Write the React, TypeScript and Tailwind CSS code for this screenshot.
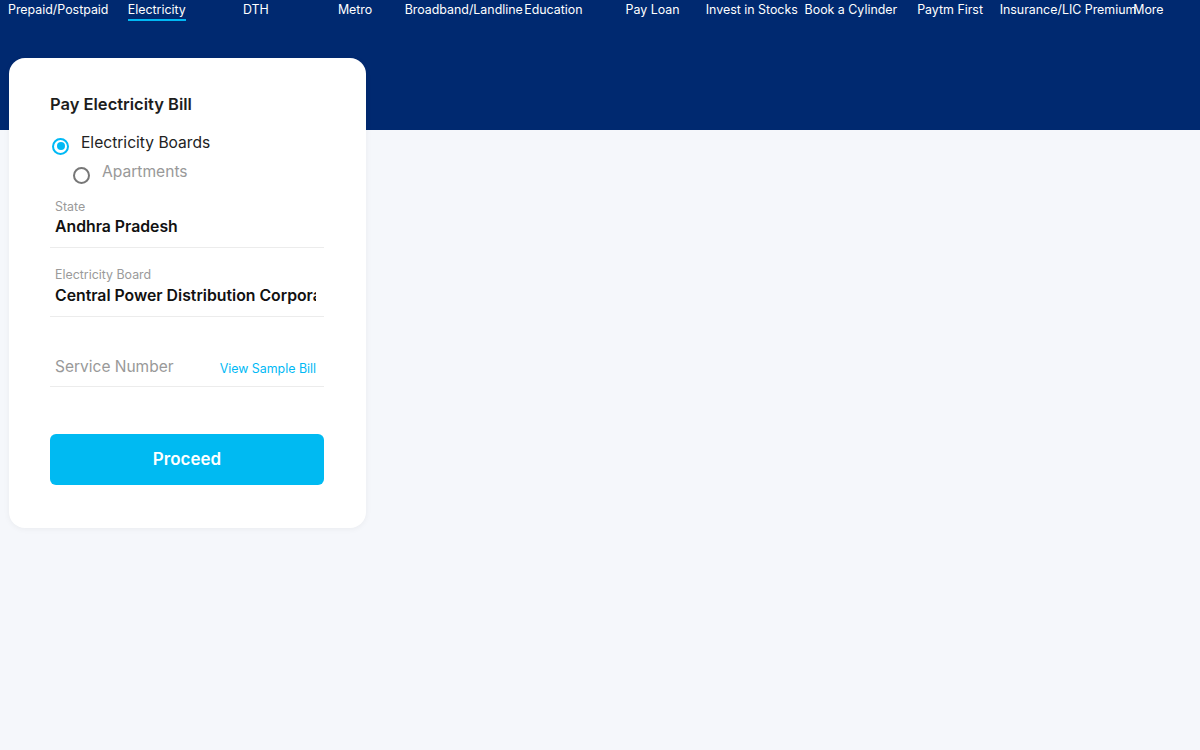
import React, { useState } from 'react';

const NAV_ITEMS = [
  'Prepaid/Postpaid',
  'Electricity',
  'DTH',
  'Metro',
  'Broadband/Landline',
  'Education',
  'Pay Loan',
  'Invest in Stocks',
  'Book a Cylinder',
  'Paytm First',
  'Insurance/LIC Premium',
  'More',
];

const Radio: React.FC<{ checked: boolean }> = ({ checked }) => (
  <span
    className={`flex items-center justify-center w-[17px] h-[17px] rounded-full border-2 shrink-0 ${
      checked ? 'border-[#00b9f5]' : 'border-[#777]'
    }`}
  >
    {checked && <span className="w-[8px] h-[8px] rounded-full bg-[#00b9f5]" />}
  </span>
);

const App: React.FC = () => {
  const [active] = useState('Electricity');
  const [boardType, setBoardType] = useState<'boards' | 'apartments'>('boards');

  return (
    <div className="min-h-screen bg-[#f5f7fb] font-['Inter',sans-serif]">
      {/* top navigation */}
      <div className="h-[130px] bg-[#002970]">
        <nav className="grid grid-cols-12 pl-2 pr-[2px]">
          {NAV_ITEMS.map(item => (
            <div key={item} className="text-center whitespace-nowrap text-[12.4px] text-white">
              <span
                className={`inline-block leading-[19px] border-b-2 ${
                  item === active ? 'border-[#00b9f5]' : 'border-transparent'
                }`}
              >
                {item}
              </span>
            </div>
          ))}
        </nav>
      </div>

      {/* bill card */}
      <div className="mt-[-72px] ml-[9px] w-[357px] bg-white rounded-2xl shadow-[0_1px_6px_rgba(0,0,0,0.05)] pt-[34px] pb-[43px] pl-[41px] pr-[42px]">
        <h2 className="text-[16.5px] leading-6 font-semibold text-[#1d1d1d]">Pay Electricity Bill</h2>

        <label
          className="mt-[15px] flex items-center h-6 ml-[2px] gap-[12px] cursor-pointer"
          onClick={() => setBoardType('boards')}
        >
          <span className="mt-[6px]">
            <Radio checked={boardType === 'boards'} />
          </span>
          <span className={`text-[15.6px] ${boardType === 'boards' ? 'text-[#222]' : 'text-[#999]'}`}>
            Electricity Boards
          </span>
        </label>
        <label
          className="mt-[5px] flex items-center h-6 ml-[23px] gap-[12px] cursor-pointer"
          onClick={() => setBoardType('apartments')}
        >
          <span className="mt-[6px]">
            <Radio checked={boardType === 'apartments'} />
          </span>
          <span className={`text-[15.6px] ${boardType === 'apartments' ? 'text-[#222]' : 'text-[#999]'}`}>
            Apartments
          </span>
        </label>

        <div className="mt-[15px] pl-[5px] pr-2 pb-2 border-b border-[#ececec]">
          <div className="text-[12.4px] leading-4 text-[#9a9a9a]">State</div>
          <div className="text-[15.8px] leading-6 font-semibold text-[#111]">Andhra Pradesh</div>
        </div>

        <div className="mt-[19px] pl-[5px] pr-2 pb-[8px] border-b border-[#ececec]">
          <div className="text-[12.4px] leading-4 text-[#9a9a9a]">Electricity Board</div>
          <div className="mt-[1px] text-[15.8px] leading-6 font-semibold text-[#111] whitespace-nowrap overflow-hidden">
            Central Power Distribution Corporation of Andhra Pradesh Ltd
          </div>
        </div>

        <div className="mt-[38px] pl-[5px] pr-2 pb-[7px] border-b border-[#ececec] flex items-center justify-between">
          <span className="text-[15.5px] leading-6 text-[#999]">Service Number</span>
          <span className="text-[12.4px] text-[#00b9f5] mt-[4px]">View Sample Bill</span>
        </div>

        <button className="mt-[47px] w-full h-[51px] rounded-md bg-[#00baf2] text-white text-[17px] font-semibold">
          Proceed
        </button>
      </div>
    </div>
  );
};

export default App;
